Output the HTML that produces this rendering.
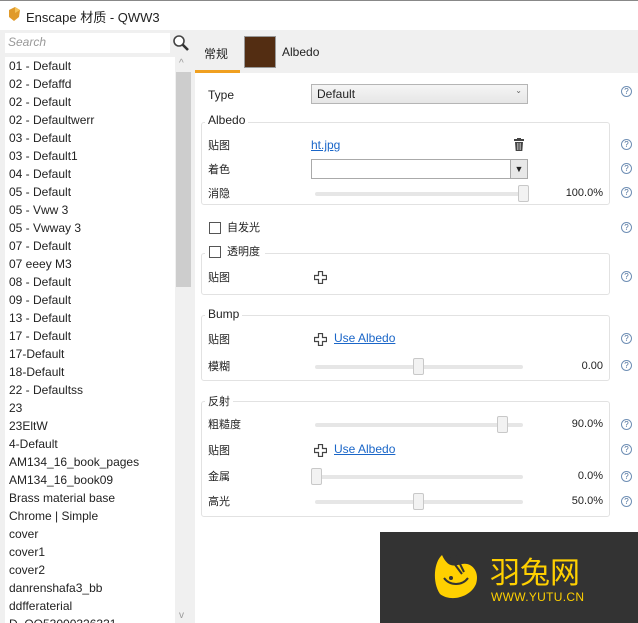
<!DOCTYPE html>
<html><head><meta charset="utf-8"><style>
*{margin:0;padding:0;box-sizing:border-box}
html{width:638px;height:623px;overflow:hidden}
body{width:638px;height:623px;overflow:hidden;background:#f0f0f0;font-family:"Liberation Sans","Noto Sans CJK SC",sans-serif;font-size:12px;color:#222;position:relative}
.a{position:absolute}
.title{left:0;top:0;width:638px;height:30px;background:#fff;border-top:1px solid #888}
.list{left:5px;top:57px;width:170px;height:566px;background:#fff;overflow:hidden}
.list div{position:absolute;left:4px;font-size:12px;line-height:16px}
.content{left:195px;top:73px;width:443px;height:550px;background:#fff}
.lbl{font-size:11px;line-height:14px}
.box{border:1px solid #e2e2e2;border-radius:3px;background:#fff}
.q{width:11px;height:11px;border:1px solid #6f8fb5;border-radius:50%;font-size:8px;line-height:9px;text-align:center;color:#4a6e9a;left:621px}
.tr{height:4px;background:#e6e6e6;border-radius:2px}
.th{width:11px;height:17px;background:#f2f2f2;border:1px solid #c8c8c8;border-radius:2px}
.lnk{color:#1a66c8;text-decoration:underline;font-size:12px}
.val{font-size:11px;text-align:right;width:60px}
</style></head><body>
<div class="a title"></div>
<svg class="a" style="left:6px;top:6px" width="16" height="16" viewBox="0 0 16 16"><path d="M3 4 L9 1 L14 4 L13 11 L8 15 L3 11Z" fill="#e09a2a"/><path d="M9 1 L14 4 L9 7Z" fill="#f5c25a"/></svg>
<div class="a" style="left:26px;top:7px;font-size:13px">Enscape 材质 - QWW3</div>
<div class="a" style="left:5px;top:33px;width:165px;height:20px;background:#fff"></div>
<div class="a" style="left:8px;top:35px;font-size:12px;font-style:italic;color:#999">Search</div>
<svg class="a" style="left:172px;top:34px" width="18" height="18" viewBox="0 0 18 18"><circle cx="7" cy="7" r="5" fill="#fff" stroke="#444" stroke-width="1.6"/><path d="M10.5 10.5 L16 16" stroke="#333" stroke-width="2.6"/></svg>
<div class="a list">
<div style="top:1px">01 - Default</div><div style="top:19px">02 - Defaffd</div><div style="top:37px">02 - Default</div><div style="top:55px">02 - Defaultwerr</div><div style="top:73px">03 - Default</div><div style="top:91px">03 - Default1</div><div style="top:109px">04 - Default</div><div style="top:127px">05 - Default</div><div style="top:145px">05 - Vww 3</div><div style="top:163px">05 - Vwway 3</div><div style="top:181px">07 - Default</div><div style="top:199px">07 eeey M3</div><div style="top:217px">08 - Default</div><div style="top:235px">09 - Default</div><div style="top:253px">13 - Default</div><div style="top:271px">17 - Default</div><div style="top:289px">17-Default</div><div style="top:307px">18-Default</div><div style="top:325px">22 - Defaultss</div><div style="top:343px">23</div><div style="top:361px">23EltW</div><div style="top:379px">4-Default</div><div style="top:397px">AM134_16_book_pages</div><div style="top:415px">AM134_16_book09</div><div style="top:433px">Brass material base</div><div style="top:451px">Chrome | Simple</div><div style="top:469px">cover</div><div style="top:487px">cover1</div><div style="top:505px">cover2</div><div style="top:523px">danrenshafa3_bb</div><div style="top:541px">ddfferaterial</div><div style="top:559px">D_QQ53000326331</div>
</div>
<div class="a" style="left:175px;top:57px;width:17px;height:566px;background:#f0f0f0"></div>
<div class="a" style="left:179px;top:58px;font-size:10px;color:#999">^</div>
<div class="a" style="left:176px;top:72px;width:15px;height:215px;background:#cdcdcd"></div>
<div class="a" style="left:179px;top:610px;font-size:10px;color:#999">v</div>
<div class="a" style="left:204px;top:45px;font-size:12px">常规</div>
<div class="a" style="left:195px;top:70px;width:45px;height:3px;background:#f0a020"></div>
<div class="a" style="left:244px;top:36px;width:32px;height:32px;background:#532d12;border:1px solid #999"></div>
<div class="a" style="left:282px;top:45px;font-size:12px">Albedo</div>
<div class="a content"></div>
<div class="a lbl" style="left:208px;top:88px;font-size:12px">Type</div>
<div class="a" style="left:311px;top:84px;width:217px;height:20px;background:linear-gradient(#f5f5f5,#e6e6e6);border:1px solid #b5b5b5;font-size:12px;padding:2px 5px">Default<span style="position:absolute;right:5px;top:1px;font-size:8px;color:#666">⌄</span></div>
<div class="a box" style="left:201px;top:122px;width:409px;height:83px"></div>
<div class="a" style="left:205px;top:113px;background:#fff;padding:0 3px;font-size:12px">Albedo</div>
<div class="a lbl" style="left:208px;top:139px">贴图</div>
<div class="a lnk" style="left:311px;top:138px">ht.jpg</div>
<svg class="a" style="left:514px;top:138px" width="10" height="13" viewBox="0 0 10 13"><rect x="0" y="1" width="10" height="2" fill="#444"/><rect x="3" y="0" width="4" height="1.5" fill="#444"/><path d="M1 4 H9 L8.3 13 H1.7Z" fill="#444"/><path d="M3.5 5 V12 M5 5 V12 M6.5 5 V12" stroke="#ddd" stroke-width="0.6"/></svg>
<div class="a lbl" style="left:208px;top:163px">着色</div>
<div class="a" style="left:311px;top:159px;width:217px;height:20px;background:#fff;border:1px solid #aaa"></div>
<div class="a" style="left:510px;top:160px;width:17px;height:18px;background:#e8e8e8;border-left:1px solid #aaa;font-size:9px;text-align:center;line-height:18px">▼</div>
<div class="a lbl" style="left:208px;top:187px">消隐</div>
<div class="a tr" style="left:315px;top:192px;width:208px"></div>
<div class="a th" style="left:518px;top:185px"></div>
<div class="a val" style="left:543px;top:187px">100.0%</div>
<div class="a" style="left:209px;top:222px;width:12px;height:12px;border:1px solid #555;background:#fff"></div>
<div class="a lbl" style="left:227px;top:221px">自发光</div>
<div class="a box" style="left:201px;top:253px;width:409px;height:42px"></div>
<div class="a" style="left:205px;top:244px;width:60px;height:16px;background:#fff"></div>
<div class="a" style="left:209px;top:246px;width:12px;height:12px;border:1px solid #555;background:#fff"></div>
<div class="a lbl" style="left:227px;top:245px">透明度</div>
<div class="a lbl" style="left:208px;top:271px">贴图</div>
<svg class="a" style="left:314px;top:271px" width="13" height="13" viewBox="0 0 13 13"><path d="M4.5 0.5 H8.5 V4.5 H12.5 V8.5 H8.5 V12.5 H4.5 V8.5 H0.5 V4.5 H4.5Z" fill="#fff" stroke="#444" stroke-width="1.2"/></svg>
<div class="a box" style="left:201px;top:315px;width:409px;height:66px"></div>
<div class="a" style="left:205px;top:307px;background:#fff;padding:0 3px;font-size:12px">Bump</div>
<div class="a lbl" style="left:208px;top:333px">贴图</div>
<svg class="a" style="left:314px;top:333px" width="13" height="13" viewBox="0 0 13 13"><path d="M4.5 0.5 H8.5 V4.5 H12.5 V8.5 H8.5 V12.5 H4.5 V8.5 H0.5 V4.5 H4.5Z" fill="#fff" stroke="#444" stroke-width="1.2"/></svg>
<div class="a lnk" style="left:334px;top:331px">Use Albedo</div>
<div class="a lbl" style="left:208px;top:360px">模糊</div>
<div class="a tr" style="left:315px;top:365px;width:208px"></div>
<div class="a th" style="left:413px;top:358px"></div>
<div class="a val" style="left:543px;top:360px">0.00</div>
<div class="a box" style="left:201px;top:401px;width:409px;height:116px"></div>
<div class="a" style="left:205px;top:393px;background:#fff;padding:0 3px;font-size:11px">反射</div>
<div class="a lbl" style="left:208px;top:418px">粗糙度</div>
<div class="a tr" style="left:315px;top:423px;width:208px"></div>
<div class="a th" style="left:497px;top:416px"></div>
<div class="a val" style="left:543px;top:418px">90.0%</div>
<div class="a lbl" style="left:208px;top:444px">贴图</div>
<svg class="a" style="left:314px;top:444px" width="13" height="13" viewBox="0 0 13 13"><path d="M4.5 0.5 H8.5 V4.5 H12.5 V8.5 H8.5 V12.5 H4.5 V8.5 H0.5 V4.5 H4.5Z" fill="#fff" stroke="#444" stroke-width="1.2"/></svg>
<div class="a lnk" style="left:334px;top:442px">Use Albedo</div>
<div class="a lbl" style="left:208px;top:470px">金属</div>
<div class="a tr" style="left:315px;top:475px;width:208px"></div>
<div class="a th" style="left:311px;top:468px"></div>
<div class="a val" style="left:543px;top:470px">0.0%</div>
<div class="a lbl" style="left:208px;top:495px">高光</div>
<div class="a tr" style="left:315px;top:500px;width:208px"></div>
<div class="a th" style="left:413px;top:493px"></div>
<div class="a val" style="left:543px;top:495px">50.0%</div>
<div class="a q" style="top:86px">?</div><div class="a q" style="top:139px">?</div><div class="a q" style="top:163px">?</div><div class="a q" style="top:187px">?</div><div class="a q" style="top:222px">?</div><div class="a q" style="top:271px">?</div><div class="a q" style="top:333px">?</div><div class="a q" style="top:360px">?</div><div class="a q" style="top:419px">?</div><div class="a q" style="top:444px">?</div><div class="a q" style="top:471px">?</div><div class="a q" style="top:496px">?</div>
<div class="a" style="left:380px;top:532px;width:258px;height:91px;background:#333"></div>
<svg class="a" style="left:432px;top:552px" width="50" height="50" viewBox="0 0 50 50"><path d="M10 3 C2 10 0 30 8 42 C18 50 38 46 44 32 C48 20 40 10 30 12 C22 14 16 16 10 3Z" fill="#ffd000"/><path d="M18 6 L30 22 M24 4 L32 20" stroke="#333" stroke-width="2"/><path d="M12 26 C18 34 30 34 36 26" stroke="#333" stroke-width="2" fill="none"/><circle cx="19" cy="26" r="2" fill="#333"/></svg>
<div class="a" style="left:490px;top:554px;font-size:30px;line-height:32px;color:#ffd000;font-family:'Noto Sans CJK SC',sans-serif">羽兔网</div>
<div class="a" style="left:491px;top:590px;font-size:12px;color:#ffd000;letter-spacing:0.3px">WWW.YUTU.CN</div>
</body></html>
